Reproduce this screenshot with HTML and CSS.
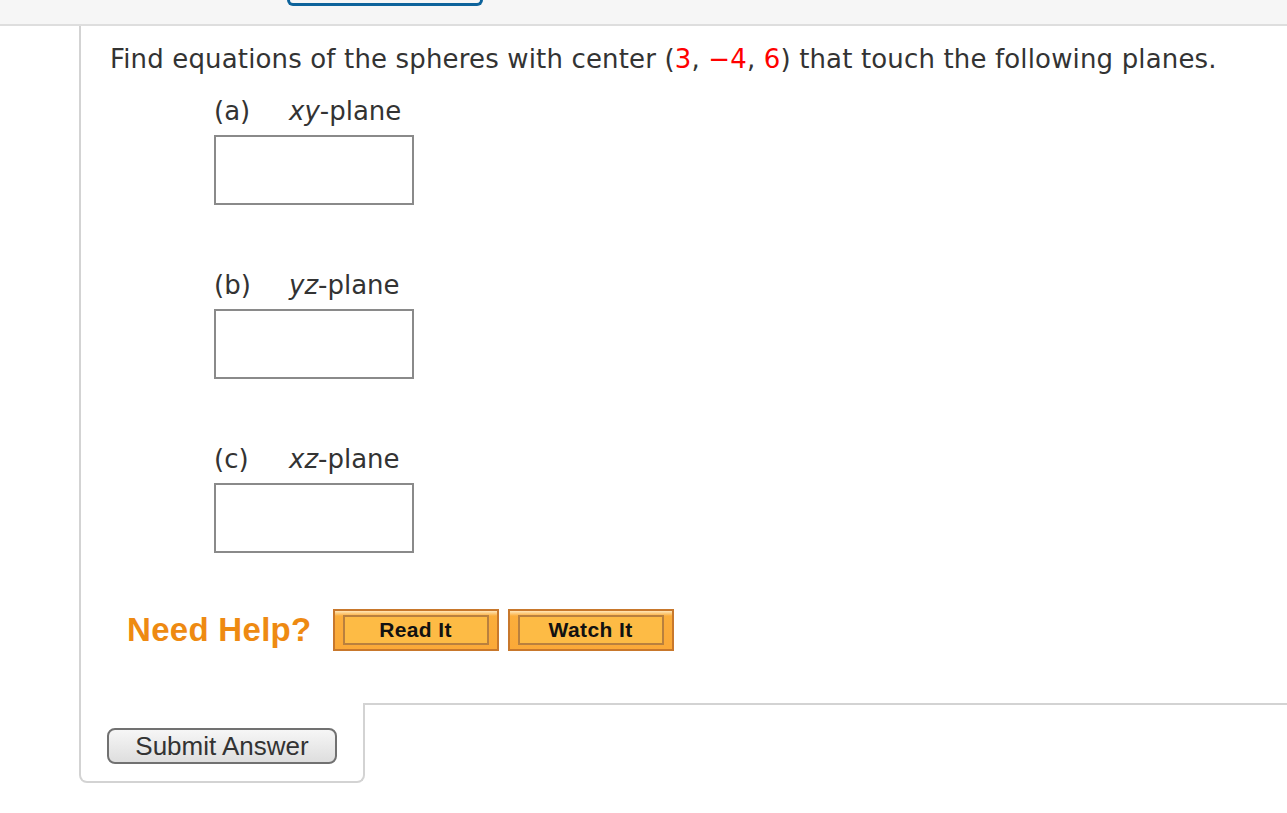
FILE: index.html
```html
<!DOCTYPE html>
<html>
<head>
<meta charset="utf-8">
<link rel="stylesheet" href="styles.css">
</head>
<body>
<div class="topbar"><div class="toptab"></div></div>
<div class="question">
  <p class="prompt">Find equations of the spheres with center (<span class="red">3</span>, <span class="red">&minus;4</span>, <span class="red">6</span>) that touch the following planes.</p>
  <div class="part">
    <div class="label"><span class="letter">(a)</span><span><i>xy</i>-plane</span></div>
    <div class="answer"></div>
  </div>
  <div class="part">
    <div class="label"><span class="letter">(b)</span><span><i>yz</i>-plane</span></div>
    <div class="answer"></div>
  </div>
  <div class="part">
    <div class="label"><span class="letter">(c)</span><span><i>xz</i>-plane</span></div>
    <div class="answer"></div>
  </div>
  <div class="help">
    <span class="need">Need Help?</span>
    <span class="hbtn"><span class="hinner">Read It</span></span>
    <span class="hbtn"><span class="hinner">Watch It</span></span>
  </div>
</div>
<div class="footer">
  <div class="tab"><button class="submit">Submit Answer</button></div>
  <div class="rest"></div>
</div>
</body>
</html>
```
FILE: styles.css
```css
html, body {
  margin: 0;
  padding: 0;
  background: #fff;
}
body {
  font-family: "DejaVu Sans", Verdana, sans-serif;
  color: #333;
}
.topbar {
  height: 24px;
  background: #f6f6f6;
  border-bottom: 2px solid #dedede;
}
.toptab {
  margin-left: 287px;
  width: 190px;
  height: 3px;
  border: 3px solid #0d639b;
  border-top: none;
  border-radius: 0 0 7px 7px;
}
.question {
  margin-left: 79px;
  border-left: 2px solid #d3d3d3;
  padding: 18px 0 52px 29px;
}
.prompt {
  margin: 0;
  font-size: 26px;
  line-height: 30px;
  letter-spacing: 0.15px;
}
.red { color: #f00; }
.part {
  padding-left: 104px;
  margin-top: 22px;
}
.part + .part { margin-top: 65px; }
.label {
  font-size: 26px;
  line-height: 30px;
  display: flex;
}
.letter { width: 75px; }
.label i { font-style: oblique; }
.answer {
  margin-top: 9px;
  width: 196px;
  height: 66px;
  border: 2px solid #8a8a8a;
}
.help {
  margin-top: 56px;
  margin-left: 17px;
  display: flex;
  align-items: center;
  gap: 9px;
}
.need {
  font-family: "Liberation Sans", Arial, sans-serif;
  font-weight: bold;
  font-size: 33px;
  color: #ee8a12;
  margin-right: 12px;
  letter-spacing: 0.3px;
}
.hbtn {
  display: block;
  width: 166px;
  height: 42px;
  border: 2px solid #c8782c;
  background: linear-gradient(#ffe6b8 0, #fbae3c 5px, #fba938 100%);
  padding: 4px 8px;
  box-sizing: border-box;
}
.hinner {
  display: flex;
  align-items: center;
  justify-content: center;
  height: 100%;
  border: 2px solid #b9803e;
  background: #fdbb45;
  box-sizing: border-box;
  font-family: "Liberation Sans", Arial, sans-serif;
  font-weight: bold;
  font-size: 21px;
  color: #111;
  letter-spacing: 0.4px;
}
.footer {
  display: flex;
}
.tab {
  margin-left: 79px;
  width: 256px;
  height: 53px;
  border: 2px solid #d3d3d3;
  border-top: none;
  border-radius: 0 0 8px 8px;
  padding: 25px 0 0 26px;
}
.submit {
  display: block;
  width: 230px;
  height: 36px;
  border: 2px solid #717171;
  border-radius: 8px;
  background: linear-gradient(#f6f6f6, #dedede);
  font-family: "Liberation Sans", Arial, sans-serif;
  font-size: 26px;
  color: #333;
  padding: 0;
  line-height: 32px;
}
.rest {
  flex: 1;
  border-top: 2px solid #d3d3d3;
}
```
